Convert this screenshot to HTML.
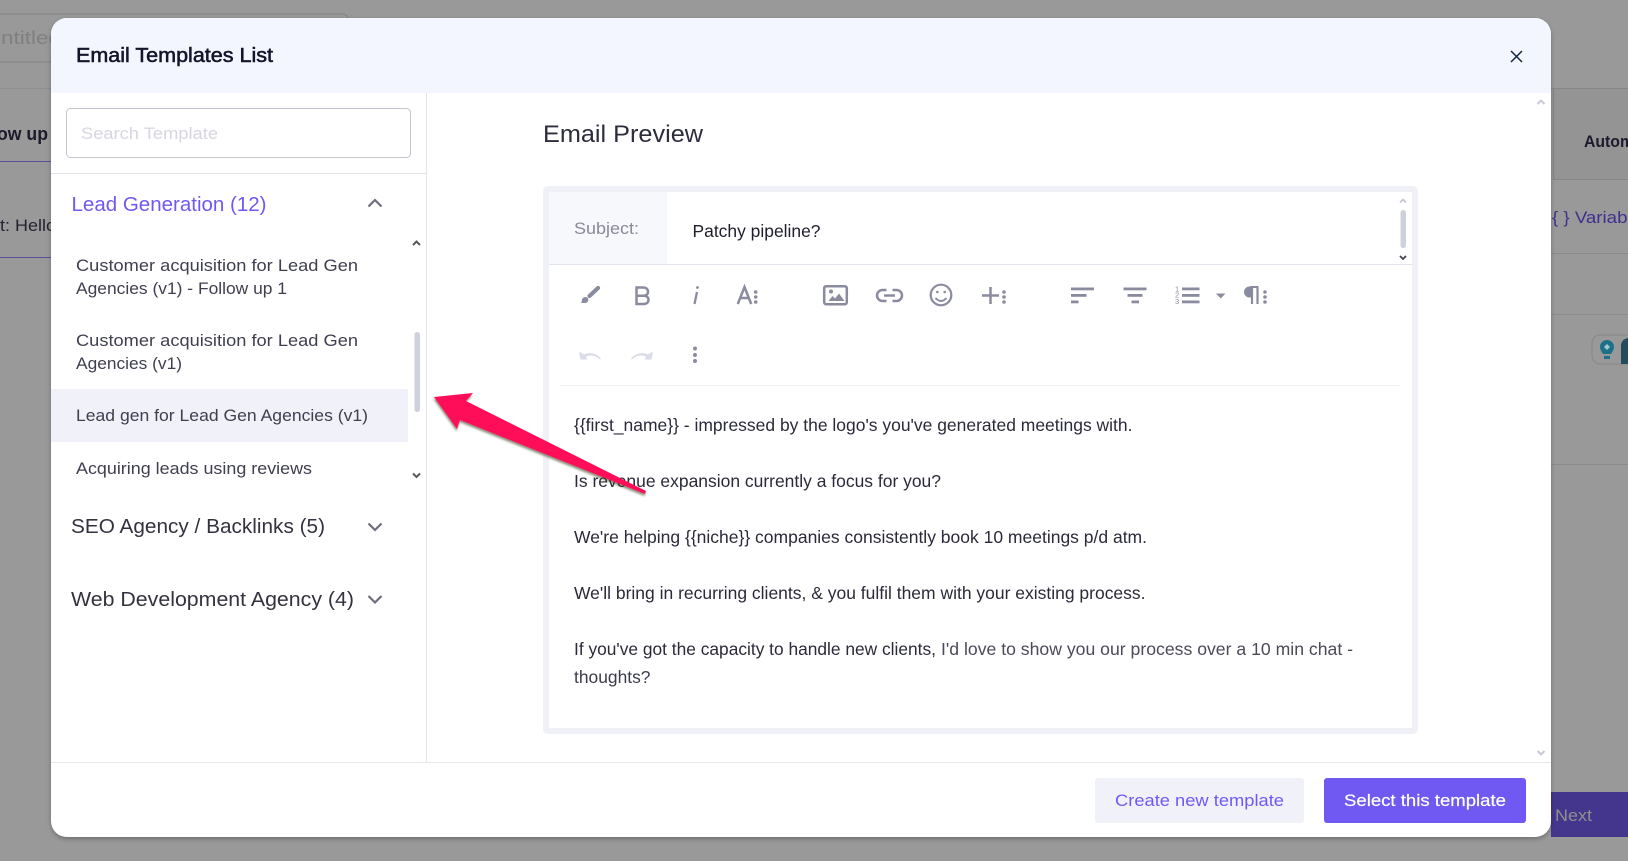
<!DOCTYPE html>
<html>
<head>
<meta charset="utf-8">
<title>Email Templates List</title>
<style>
html,body{margin:0;padding:0;width:1628px;height:861px;overflow:hidden;background:#999}
svg{display:block}
text{font-family:"Liberation Sans",sans-serif;white-space:pre}
</style>
</head>
<body>
<svg xmlns="http://www.w3.org/2000/svg" width="1628" height="861" viewBox="0 0 1628 861">
<defs>
<filter id="ms" x="-5%" y="-5%" width="110%" height="110%"><feDropShadow dx="0" dy="2" stdDeviation="2.5" flood-color="#000" flood-opacity="0.28"/></filter>
<filter id="as" x="-10%" y="-10%" width="125%" height="125%"><feDropShadow dx="-0.5" dy="2" stdDeviation="1" flood-color="#3a3a20" flood-opacity="0.6"/></filter>
<clipPath id="mc"><rect x="51" y="18" width="1500" height="819" rx="16"/></clipPath>
</defs>

<!-- page background -->
<rect width="1628" height="861" fill="#999"/>
<rect x="-10" y="14" width="358" height="48" rx="5" fill="none" stroke="#848484" stroke-width="1"/>
<text x="1" y="44" font-size="18.500" fill="#7f7f7f" textLength="60" lengthAdjust="spacingAndGlyphs">ntitled</text>
<rect x="0" y="88" width="1628" height="1" fill="#8f8f8f"/>
<text x="-3" y="140" font-size="18" font-weight="bold" fill="#1c1a2b" textLength="51" lengthAdjust="spacingAndGlyphs">ow up</text>
<rect x="0" y="161" width="60" height="1" fill="#5b5296"/>
<text x="0" y="231" font-size="17" fill="#26222f" textLength="56" lengthAdjust="spacingAndGlyphs">t: Hello</text>
<rect x="0" y="257" width="60" height="1" fill="#5b5296"/>
<rect x="1553" y="88" width="75" height="91" fill="#949495"/>
<rect x="1553" y="88" width="75" height="1" fill="#868688"/>
<rect x="1553" y="88" width="1" height="91" fill="#868688"/>
<rect x="1553" y="179" width="75" height="1" fill="#868688"/>
<text x="1584" y="147" font-size="17" font-weight="bold" fill="#1c1a2b" textLength="50" lengthAdjust="spacingAndGlyphs">Autom</text>
<text x="1552" y="223" font-size="17" fill="#3e3190" textLength="90" lengthAdjust="spacingAndGlyphs">{ } Variable</text>
<rect x="1551" y="253" width="77" height="1" fill="#8a8a8a"/>
<rect x="1551" y="314" width="77" height="1" fill="#8c8c8c"/>
<rect x="1592" y="335" width="60" height="29" rx="8" fill="none" stroke="#888" stroke-width="1"/>
<path d="M1607 340a7 7 0 0 1 7 7c0 3-2 5-3 7h-8c-1-2-3-4-3-7a7 7 0 0 1 7-7zM1604 356h6v3h-6z" fill="#1d7089"/>
<path d="M1607 344l3 3-3 3-3-3z" fill="#a8c6d0"/>
<path d="M1621 364v-20a8 8 0 0 1 7-6v26z" fill="#244c5c"/>
<rect x="1551" y="464" width="77" height="1" fill="#8c8c8c"/>
<rect x="1551" y="792" width="77" height="45" fill="#44368c"/>
<text x="1555" y="821" font-size="17" fill="#8f8f8f" textLength="37" lengthAdjust="spacingAndGlyphs">Next</text>

<!-- modal -->
<rect x="51" y="18" width="1500" height="819" rx="16" fill="#fff" filter="url(#ms)"/>
<g clip-path="url(#mc)">
<rect x="51" y="18" width="1500" height="75" fill="#f3f6ff"/>
</g>
<text x="76" y="62" font-size="20" fill="#14142b" stroke="#14142b" stroke-width="0.55" textLength="197" lengthAdjust="spacingAndGlyphs">Email Templates List</text>
<path d="M1511 51l11 11M1522 51l-11 11" stroke="#15233f" stroke-width="1.5" fill="none"/>

<!-- left panel -->
<rect x="426" y="93" width="1" height="669" fill="#e4e4ee"/>
<rect x="66.5" y="108.5" width="344" height="49" rx="4" fill="#fff" stroke="#c4c4d0" stroke-width="1"/>
<text x="81" y="139" font-size="17" fill="#d6d6e0" textLength="137" lengthAdjust="spacingAndGlyphs">Search Template</text>
<rect x="51" y="173" width="375" height="1" fill="#e4e4ee"/>
<text x="71.5" y="211" font-size="20" fill="#7059f2" textLength="195" lengthAdjust="spacingAndGlyphs">Lead Generation (12)</text>
<path d="M368.500 206.500l6.500-6.500 6.500 6.500" fill="none" stroke="#6d6d7d" stroke-width="2.200"/>
<path d="M413 245l3.500-3.500 3.500 3.500" fill="none" stroke="#555560" stroke-width="2"/>

<text x="76" y="271" font-size="17" fill="#3f3f50" textLength="282" lengthAdjust="spacingAndGlyphs">Customer acquisition for Lead Gen</text>
<text x="76" y="294" font-size="17" fill="#3f3f50" textLength="211" lengthAdjust="spacingAndGlyphs">Agencies (v1) - Follow up 1</text>
<text x="76" y="346" font-size="17" fill="#3f3f50" textLength="282" lengthAdjust="spacingAndGlyphs">Customer acquisition for Lead Gen</text>
<text x="76" y="369" font-size="17" fill="#3f3f50" textLength="106" lengthAdjust="spacingAndGlyphs">Agencies (v1)</text>
<rect x="51" y="389" width="357" height="53" fill="#f1f1fa"/>
<text x="76" y="421" font-size="17" fill="#3f3f50" textLength="292" lengthAdjust="spacingAndGlyphs">Lead gen for Lead Gen Agencies (v1)</text>
<text x="76" y="474" font-size="17" fill="#3f3f50" textLength="236" lengthAdjust="spacingAndGlyphs">Acquiring leads using reviews</text>
<rect x="414.500" y="332" width="5.500" height="80" rx="2.700" fill="#ced1dc"/>
<path d="M413 473.500l3.500 3.500 3.500-3.500" fill="none" stroke="#555560" stroke-width="2"/>

<text x="71" y="533" font-size="20" fill="#33333f" textLength="254" lengthAdjust="spacingAndGlyphs">SEO Agency / Backlinks (5)</text>
<path d="M368.500 523.500l6.500 6.500 6.500-6.500" fill="none" stroke="#6d6d7d" stroke-width="2.200"/>
<text x="71" y="606" font-size="20" fill="#33333f" textLength="283" lengthAdjust="spacingAndGlyphs">Web Development Agency (4)</text>
<path d="M368.500 596l6.500 6.500 6.500-6.500" fill="none" stroke="#6d6d7d" stroke-width="2.200"/>

<!-- right panel -->
<path d="M1537.500 104l3.500-3.500 3.500 3.500" fill="none" stroke="#c8c8d6" stroke-width="2"/>
<path d="M1537.500 751l3.500 3.500 3.500-3.500" fill="none" stroke="#c8c8d6" stroke-width="2"/>
<text x="543" y="142" font-size="24" fill="#2d2d3d" textLength="160" lengthAdjust="spacingAndGlyphs">Email Preview</text>

<!-- editor card -->
<rect x="546" y="189" width="869" height="542" rx="2" fill="#fff" stroke="#f0f0f7" stroke-width="6"/>
<rect x="549" y="192" width="118" height="72" fill="#f7f8fc"/>
<rect x="549" y="264" width="863" height="1" fill="#e4e4ef"/>
<text x="574" y="234" font-size="17" fill="#8a8a96" textLength="65" lengthAdjust="spacingAndGlyphs">Subject:</text>
<text x="692.500" y="237" font-size="17.500" fill="#1e1e2c" textLength="128" lengthAdjust="spacingAndGlyphs">Patchy pipeline?</text>
<path d="M1400 202.500l3-3 3 3" fill="none" stroke="#c4c4d2" stroke-width="1.600"/>
<rect x="1400.500" y="210" width="5.500" height="38" rx="2.700" fill="#ced1dc"/>
<path d="M1400 256l3 3 3-3" fill="none" stroke="#444450" stroke-width="1.800"/>

<!-- toolbar icons row 1 -->
<g fill="none" stroke="#8b8ba0" stroke-width="2.500">
<path d="M598 288l-8.500 8" stroke-width="4.200" stroke-linecap="round"/>
<path d="M581 303c1-1 .5-3 1.500-4.500 1.500-2 4.500-2 5.500 0 1 2-.5 4.500-3 4.500z" fill="#8b8ba0" stroke="none"/>
<path d="M636.500 304v-16.500h6.500c3 0 5 1.500 5 4.200s-2 4.100-5 4.100h-6.500 7c3 0 5 1.400 5 4s-2 4.200-5 4.200z"/>
<path d="M697 292l-2.500 12" stroke-width="2.300"/>
<path d="M737.800 304l6.700-17 6.700 17M740 298h9"/>
<rect x="824.200" y="286.200" width="22.600" height="18" rx="2"/>
<path d="M886.500 290h-4a5.500 5.500 0 0 0 0 11h4M892.500 290h4a5.500 5.500 0 0 1 0 11h-4M884 295.500h11"/>
<circle cx="941" cy="295" r="10.300" stroke-width="2.200"/>
<path d="M935.500 298q5.500 6 11 0" stroke-width="2"/>
<path d="M982 295.500h17M990.500 287v17"/>
<path d="M1257.500 287v17M1252 287v17" stroke-width="2.200"/>
</g>
<g fill="#8b8ba0">
<circle cx="697.500" cy="287.500" r="1.400"/>
<circle cx="755.700" cy="292" r="1.800"/><circle cx="755.700" cy="297" r="1.800"/><circle cx="755.700" cy="302" r="1.800"/>
<circle cx="831" cy="291.500" r="2"/>
<path d="M828.500 301l4-5 2.500 2.500 4-5 5.500 7.500z"/>
<circle cx="937.300" cy="292" r="1.300"/><circle cx="944.700" cy="292" r="1.300"/>
<circle cx="1004" cy="292" r="1.800"/><circle cx="1004" cy="297" r="1.800"/><circle cx="1004" cy="302" r="1.800"/>
<rect x="1071" y="287.500" width="23" height="2.800"/><rect x="1071" y="294" width="15.500" height="2.800"/><rect x="1071" y="300.500" width="7.500" height="2.800"/>
<rect x="1123.500" y="287.500" width="23" height="2.800"/><rect x="1127.500" y="294" width="15" height="2.800"/><rect x="1131.500" y="300.500" width="7.500" height="2.800"/>
<rect x="1182" y="287.500" width="17.500" height="2.800"/><rect x="1182" y="294" width="17.500" height="2.800"/><rect x="1182" y="300.500" width="17.500" height="2.800"/>
<text x="1175" y="291.500" font-size="7.500">1</text><text x="1175" y="297.500" font-size="7.500">2</text><text x="1175" y="304" font-size="7.500">3</text>
<path d="M1216 293.500h9.500l-4.750 5z"/>
<path d="M1253 286.500h-3.500a5.500 5.500 0 0 0 0 11h3.500z"/>
<path d="M1250 286h8.500v2h-8.500z"/>
<circle cx="1265" cy="292" r="1.800"/><circle cx="1265" cy="297" r="1.800"/><circle cx="1265" cy="302" r="1.800"/>
<circle cx="695" cy="348.500" r="2"/><circle cx="695" cy="355" r="2"/><circle cx="695" cy="361" r="2"/>
</g>
<!-- row 2 -->
<g fill="#dadbe6">
<path d="M579 351.500l1.500 8h7.500l-2.500-2.500c4-2.500 10-2.200 14.500 2.500l1-1c-4.500-5.500-11.500-6.800-17.200-4z"/>
<path d="M653 351.500l-1.500 8h-7.500l2.500-2.500c-4-2.500-10-2.200-14.500 2.500l-1-1c4.500-5.500 11.500-6.800 17.200-4z"/>
</g>
<rect x="560" y="385" width="840" height="1" fill="#f0f0f5"/>

<!-- email body -->
<g font-size="17.500" fill="#2a2a3a">
<text x="574" y="431" textLength="558.500" lengthAdjust="spacingAndGlyphs">{{first_name}} - impressed by the logo's you've generated meetings with.</text>
<text x="574" y="487" textLength="367" lengthAdjust="spacingAndGlyphs">Is revenue expansion currently a focus for you?</text>
<text x="574" y="543" textLength="573" lengthAdjust="spacingAndGlyphs">We're helping {{niche}} companies consistently book 10 meetings p/d atm.</text>
<text x="574" y="599" textLength="571.500" lengthAdjust="spacingAndGlyphs">We'll bring in recurring clients, &amp; you fulfil them with your existing process.</text>
<text x="574" y="655" textLength="362" lengthAdjust="spacingAndGlyphs">If you've got the capacity to handle new clients,</text>
<text x="941" y="655" fill="#4a4a5a" textLength="412" lengthAdjust="spacingAndGlyphs">I'd love to show you our process over a 10 min chat -</text>
<text x="574" y="683" fill="#3c3c4c" textLength="76.500" lengthAdjust="spacingAndGlyphs">thoughts?</text>
</g>

<!-- footer -->
<rect x="51" y="762" width="1500" height="1" fill="#e6e6ef"/>
<rect x="1095" y="778" width="209" height="45" rx="3" fill="#f1f1fa"/>
<text x="1115" y="806" font-size="17" fill="#7059f2" textLength="169" lengthAdjust="spacingAndGlyphs">Create new template</text>
<rect x="1324" y="778" width="202" height="45" rx="3" fill="#7059f2"/>
<text x="1344" y="806" font-size="17" fill="#fff" stroke="#fff" stroke-width="0.2" textLength="162" lengthAdjust="spacingAndGlyphs">Select this template</text>

<!-- annotation arrow -->
<polygon points="434,397 473,393 466,401 646,491 645,494 460,420 457,429" fill="#fe1158" filter="url(#as)"/>
</svg>
</body>
</html>
